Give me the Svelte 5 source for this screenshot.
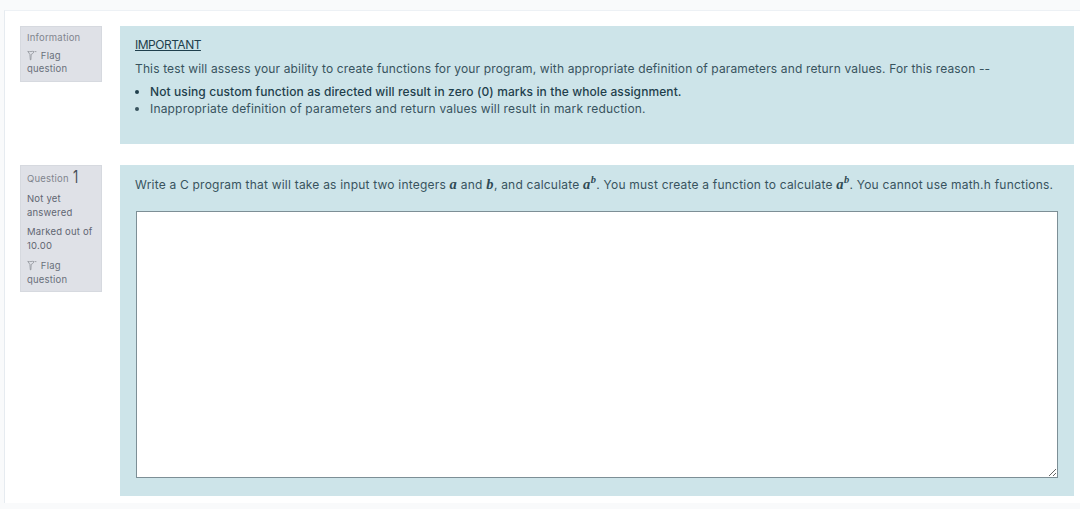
<script lang="ts">
  const items = [
    { bold: true, text: 'Not using custom function as directed will result in zero (0) marks in the whole assignment.' },
    { bold: false, text: 'Inappropriate definition of parameters and return values will result in mark reduction.' }
  ];
</script>

{#snippet flag()}
  <svg class="flag" viewBox="0 0 10 11" width="10" height="11" aria-hidden="true">
    <path d="M0.8 1.4 C3 2.2 5 0.8 7.2 1.6 L5.4 3.8 L4.2 4.4 L3.9 9.8 L3.3 9.8 L2.9 4.4 Z" fill="none" stroke="#8b8f96" stroke-width="0.75" />
    <path d="M8 1.6 L9.4 1.6" stroke="#8b8f96" stroke-width="0.75" />
  </svg>
{/snippet}

<div class="page">
  <div class="panel">
    <div class="row first">
      <div class="info">
        <div class="line">Information</div>
        <div class="flag-link">{@render flag()} Flag question</div>
      </div>
      <div class="content intro">
        <p class="important">IMPORTANT</p>
        <p class="lead">This test will assess your ability to create functions for your program, with appropriate definition of parameters and return values. For this reason --</p>
        <ul>
          {#each items as item}
            <li class:bold={item.bold}>{item.text}</li>
          {/each}
        </ul>
      </div>
    </div>

    <div class="row">
      <div class="info">
        <div class="line qno">Question <span class="num">1</span></div>
        <div class="state">Not yet answered</div>
        <div class="state">Marked out of 10.00</div>
        <div class="flag-link spaced">{@render flag()} Flag question</div>
      </div>
      <div class="content question">
        <p class="prompt">Write a C program that will take as input two integers <i class="m">a</i> and <i class="m">b</i>, and calculate <i class="m">a<sup>b</sup></i>. You must create a function to calculate <i class="m">a<sup>b</sup></i>. You cannot use math.h functions.</p>
        <textarea aria-label="Answer"></textarea>
      </div>
    </div>
  </div>
</div>

<style>
  :global(body) {
    background: #f9fafb;
  }

  .page {
    height: 509px;
    padding-top: 10px;
    box-sizing: border-box;
    overflow: hidden;
    font-family: Inter, "Liberation Sans", sans-serif;
    color: #38535e;
  }

  .panel {
    margin-left: 4px;
    height: 493px;
    box-sizing: border-box;
    background: #fff;
    border-top: 1px solid #edf1f5;
    border-left: 1px solid #e6ebf0;
    padding: 15px 6px 0 15px;
  }

  .row {
    display: flex;
    align-items: flex-start;
    gap: 18px;
  }

  .row.first {
    margin-bottom: 21px;
  }

  .info {
    width: 82px;
    box-sizing: border-box;
    flex: none;
    background: #dfe1e7;
    border: 1px solid #d6d9df;
    padding: 4px 6px 5px;
    font-size: 9.5px;
    letter-spacing: 0.2px;
    line-height: 13.5px;
    color: #5f6672;
  }

  .line {
    margin-bottom: 4px;
    color: #7f858e;
  }

  .qno {
    display: flex;
    align-items: center;
    gap: 3px;
    margin-top: 1px;
    margin-bottom: 5px;
    height: 16px;
  }

  .num {
    font-size: 17px;
    font-weight: 400;
    color: #444c56;
    transform: scaleX(0.75) translateY(-1px);
  }

  .state {
    margin-bottom: 6px;
  }

  .flag-link {
    color: #69707b;
  }

  .flag-link.spaced {
    margin-top: 7px;
  }

  .flag {
    vertical-align: -2px;
    margin-right: 1px;
  }

  .content {
    flex: 1;
    box-sizing: border-box;
    background: #cde4e9;
    padding: 0 15px;
    font-size: 12px;
    letter-spacing: 0.14px;
  }

  .intro {
    height: 118px;
  }

  .question {
    height: 331px;
  }

  p {
    margin: 0;
  }

  .important {
    padding-top: 12px;
    line-height: 14px;
    text-decoration: underline;
    letter-spacing: -0.5px;
    color: #1f3f4c;
  }

  .lead {
    margin-top: 10px;
    line-height: 14px;
    white-space: nowrap;
  }

  ul {
    margin: 7px 0 0;
    padding: 0 0 0 15px;
    line-height: 17px;
  }

  li {
    letter-spacing: 0.18px;
  }

  li.bold {
    margin-top: 1px;
    font-weight: 500;
    letter-spacing: 0.1px;
    color: #1f3f4c;
  }

  .prompt {
    padding-top: 13px;
    line-height: 14px;
    white-space: nowrap;
    letter-spacing: 0.21px;
  }

  .m {
    font-family: "Liberation Serif", serif;
    font-size: 14.5px;
    font-weight: 700;
    line-height: 0;
    letter-spacing: 0.4px;
    color: #2f4a55;
  }

  sup {
    font-size: 10.5px;
    line-height: 0;
  }

  textarea {
    display: block;
    box-sizing: border-box;
    width: 922px;
    height: 267px;
    margin: 19px 0 0 1px;
    background: #fff;
    border: 1px solid #7d8f96;
    border-radius: 0;
    padding: 0;
    outline: none;
  }
</style>
